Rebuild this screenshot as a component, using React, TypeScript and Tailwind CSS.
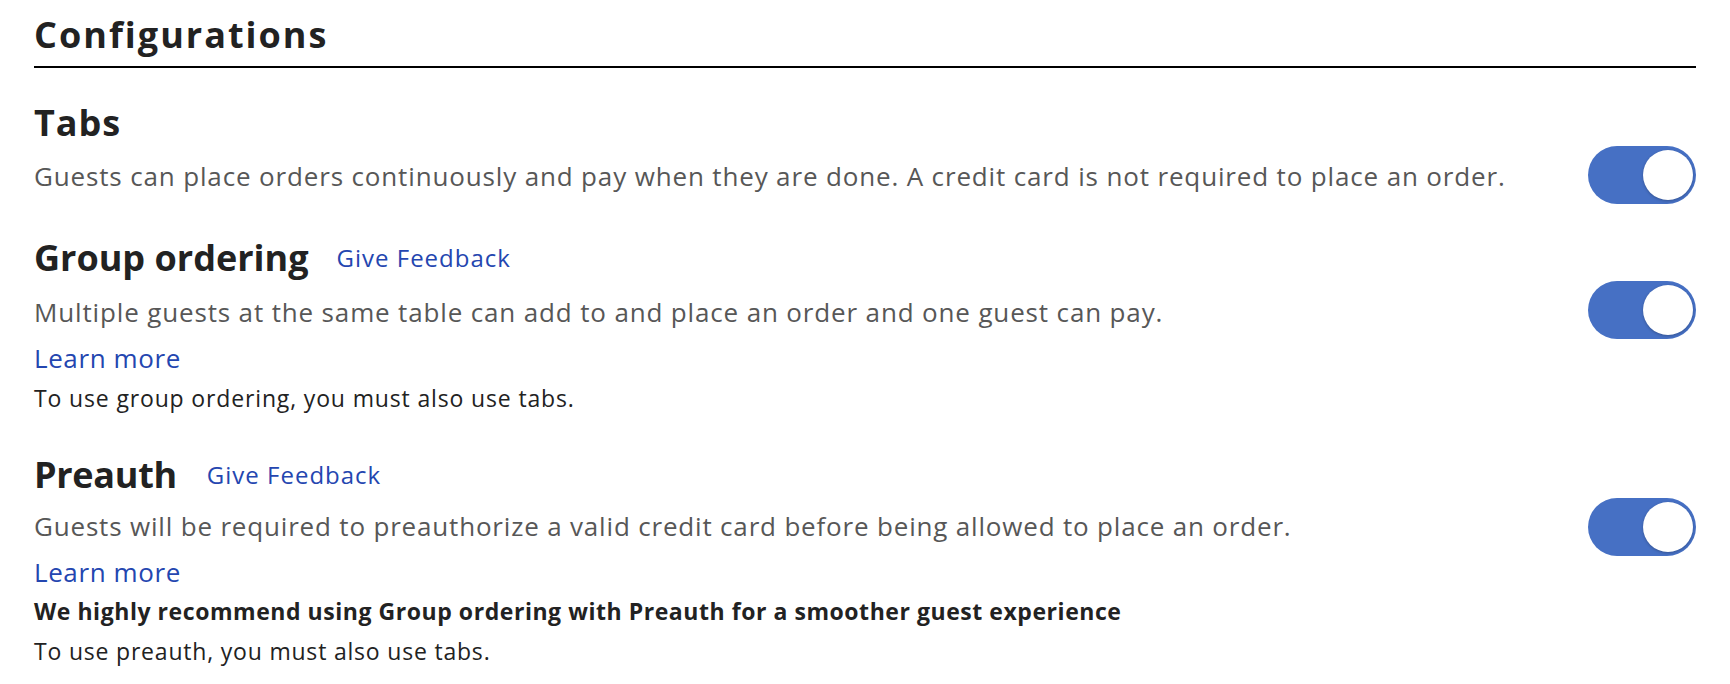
import React from "react";

function Toggle() {
  return (
    <div className="mt-[45px] flex h-[58px] w-[108px] shrink-0 items-center justify-end rounded-full bg-[#4670c4] pr-[3px]">
      <div className="h-[50px] w-[50px] rounded-full bg-white shadow-[0_1px_3px_rgba(0,0,0,0.25)]" />
    </div>
  );
}

function Heading({
  title,
  feedback,
  gap,
  tracking,
}: {
  title: string;
  feedback?: boolean;
  gap: string;
  tracking: string;
}) {
  return (
    <div className={`flex items-center ${gap}`}>
      <h2 className={`text-[36px] leading-[44px] font-bold text-[#222222] ${tracking}`}>{title}</h2>
      {feedback && (
        <a className="text-[24px] leading-[44px] tracking-[1px] text-[#2446b0]">Give Feedback</a>
      )}
    </div>
  );
}

export default function App() {
  return (
    <div
      className="min-h-[684px] bg-white px-[34px] pt-[13px]"
      style={{ fontFamily: "'Open Sans', 'Noto Sans', sans-serif" }}
    >
      <h1 className="border-b-2 border-black pb-[9px] text-[36px] leading-[44px] font-bold tracking-[2px] text-[#222222]">
        Configurations
      </h1>

      <div className="mt-[33px] flex items-start justify-between">
        <div>
          <Heading title="Tabs" gap="gap-[32px]" tracking="tracking-[1px]" />
          <p className="mt-[13px] text-[26px] leading-[36px] tracking-[0.85px] text-[#575757]">
            Guests can place orders continuously and pay when they are done. A credit card is not required to place an order.
          </p>
        </div>
        <Toggle />
      </div>

      <div className="mt-[32px] flex items-start justify-between">
        <div>
          <Heading title="Group ordering" feedback gap="gap-[28px]" tracking="tracking-[0px]" />
          <p className="mt-[14px] text-[26px] leading-[36px] tracking-[0.85px] text-[#575757]">
            Multiple guests at the same table can add to and place an order and one guest can pay.
          </p>
          <a className="mt-[10px] block text-[26px] leading-[36px] tracking-[0.6px] text-[#2446b0]">Learn more</a>
          <p className="mt-[6px] text-[23px] leading-[32px] tracking-[0.85px] text-[#222222]">
            To use group ordering, you must also use tabs.
          </p>
        </div>
        <Toggle />
      </div>

      <div className="mt-[39px] flex items-start justify-between">
        <div>
          <Heading title="Preauth" feedback gap="gap-[30px]" tracking="tracking-[-0.3px]" />
          <p className="mt-[11px] text-[26px] leading-[36px] tracking-[0.82px] text-[#575757]">
            Guests will be required to preauthorize a valid credit card before being allowed to place an order.
          </p>
          <a className="mt-[10px] block text-[26px] leading-[36px] tracking-[0.6px] text-[#2446b0]">Learn more</a>
          <p className="mt-[5px] text-[23px] leading-[32px] font-bold tracking-[0.55px] text-[#222222]">
            We highly recommend using Group ordering with Preauth for a smoother guest experience
          </p>
          <p className="mt-[8px] text-[23px] leading-[32px] tracking-[0.8px] text-[#222222]">
            To use preauth, you must also use tabs.
          </p>
        </div>
        <Toggle />
      </div>
    </div>
  );
}
